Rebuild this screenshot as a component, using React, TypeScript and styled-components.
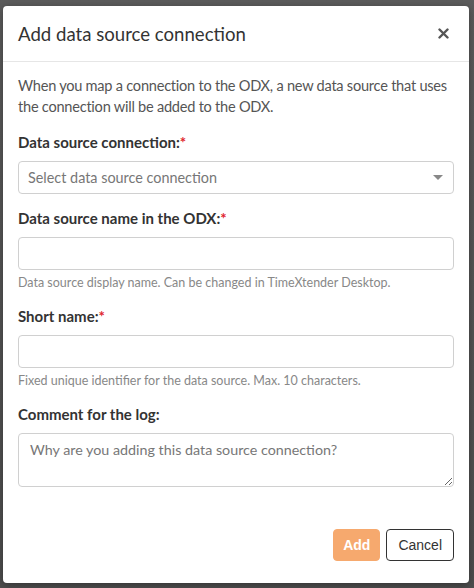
import styled, { createGlobalStyle } from "styled-components";

const GlobalStyle = createGlobalStyle`
  html, body {
    margin: 0;
    padding: 0;
    background: #555555;
  }
  * {
    box-sizing: border-box;
  }
`;

const fontStack = `Lato, "Noto Sans", "Liberation Sans", sans-serif`;

const App = () => {
  return (
    <>
      <GlobalStyle />
      <Backdrop>
        <Dialog>
          <Header>
            <Title>Add data source connection</Title>
            <CloseButton aria-label="Close">
              <svg width="11" height="11" viewBox="0 0 11 11">
                <path d="M1.5 1.5 L9.5 9.5 M9.5 1.5 L1.5 9.5" stroke="#555" strokeWidth="2.4" strokeLinecap="round" />
              </svg>
            </CloseButton>
          </Header>
          <Body>
            <Intro>
              When you map a connection to the ODX, a new data source that uses the connection will be added to the ODX.
            </Intro>

            <Field>
              <Label>
                Data source connection:<Required>*</Required>
              </Label>
              <SelectBox>
                <Placeholder>Select data source connection</Placeholder>
                <Caret />
              </SelectBox>
            </Field>

            <Field>
              <Label>
                Data source name in the ODX:<Required>*</Required>
              </Label>
              <TextInput />
              <Help>Data source display name. Can be changed in TimeXtender Desktop.</Help>
            </Field>

            <Field>
              <Label>
                Short name:<Required>*</Required>
              </Label>
              <TextInput />
              <Help>Fixed unique identifier for the data source. Max. 10 characters.</Help>
            </Field>

            <Field>
              <Label>Comment for the log:</Label>
              <TextArea placeholder="Why are you adding this data source connection?" />
            </Field>
          </Body>
          <Footer>
            <Button $primary disabled>
              Add
            </Button>
            <Button>Cancel</Button>
          </Footer>
        </Dialog>
      </Backdrop>
    </>
  );
};

export default App;

const Backdrop = styled.div`
  width: 474px;
  height: 588px;
  padding: 6px 5px 5px 3px;
  background: linear-gradient(#5c5c5c, #4e4e4e);
`;

const Dialog = styled.div`
  width: 466px;
  height: 577px;
  background: #ffffff;
  border-radius: 4px;
  display: flex;
  flex-direction: column;
  font-family: ${fontStack};
  box-shadow: 0 2px 8px rgba(0, 0, 0, 0.35);
`;

const Header = styled.div`
  height: 56px;
  display: flex;
  align-items: center;
  justify-content: space-between;
  padding: 0 20px 0 15px;
  border-bottom: 1px solid #e6e6e6;
`;

const Title = styled.h4`
  margin: 0;
  font-size: 18.6px;
  font-weight: 400;
  color: #333333;
`;

const CloseButton = styled.button`
  border: none;
  background: none;
  padding: 0;
  display: flex;
  cursor: pointer;
`;

const Body = styled.div`
  padding: 13px 15px 0 15px;
  display: flex;
  flex-direction: column;
  gap: 14px;
`;

const Intro = styled.p`
  margin: 0 0 1px;
  font-size: 14.6px;
  letter-spacing: -0.25px;
  line-height: 21px;
  color: #555555;
`;

const Field = styled.div`
  display: flex;
  flex-direction: column;
`;

const Label = styled.label`
  font-size: 15px;
  line-height: 20px;
  font-weight: 700;
  color: #333333;
  margin-bottom: 9px;
`;

const Required = styled.span`
  color: #e0242c;
`;

const inputBox = `
  width: 100%;
  height: 33px;
  border: 1px solid #d0d0d0;
  border-radius: 4px;
  background: #ffffff;
`;

const SelectBox = styled.div`
  ${inputBox}
  display: flex;
  align-items: center;
  justify-content: space-between;
  padding: 0 10px 0 9px;
`;

const Placeholder = styled.span`
  font-size: 14.4px;
  color: #777777;
`;

const Caret = styled.span`
  width: 0;
  height: 0;
  border-left: 5px solid transparent;
  border-right: 5px solid transparent;
  border-top: 5px solid #888888;
`;

const TextInput = styled.input`
  ${inputBox}
  padding: 0 10px;
  font-family: ${fontStack};
  font-size: 15px;
`;

const Help = styled.span`
  margin-top: 5px;
  margin-bottom: 1px;
  font-size: 12.5px;
  line-height: 16px;
  color: #888888;
`;

const TextArea = styled.textarea`
  ${inputBox}
  height: 54px;
  padding: 7px 11px;
  font-family: ${fontStack};
  font-size: 14.3px;
  resize: vertical;
  &::placeholder {
    color: #777777;
  }
`;

const Footer = styled.div`
  margin-top: auto;
  display: flex;
  justify-content: flex-end;
  gap: 6px;
  padding: 0 15px 22px;
`;

const Button = styled.button<{ $primary?: boolean }>`
  height: 32px;
  padding: 0 ${(props) => (props.$primary ? 9 : 11)}px;
  border-radius: 4px;
  font-family: "Liberation Sans", Arial, sans-serif;
  font-size: 14px;
  border: 1px solid ${(props) => (props.$primary ? "#f6a96e" : "#333333")};
  background: ${(props) => (props.$primary ? "#f6a96e" : "#ffffff")};
  color: ${(props) => (props.$primary ? "#ffffff" : "#333333")};
  font-weight: ${(props) => (props.$primary ? 700 : 400)};
`;
